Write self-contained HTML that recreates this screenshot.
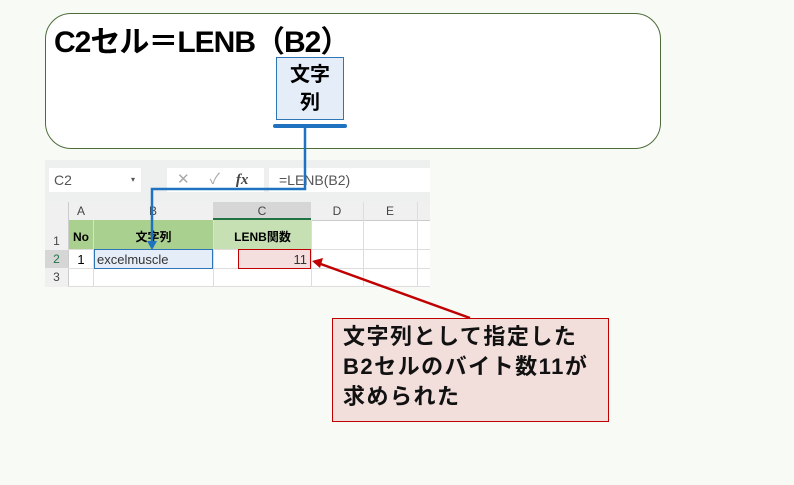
<!DOCTYPE html>
<html><head><meta charset="utf-8"><style>
body{margin:0;width:794px;height:485px;background:#f8faf5;position:relative;overflow:hidden;font-family:"Liberation Sans","Noto Sans CJK JP",sans-serif}
.a{position:absolute}
.cell{position:absolute;box-sizing:border-box;font-size:12px;display:flex;align-items:center}
</style></head><body>
<div class="a" style="left:45px;top:13px;width:616px;height:136px;border:1px solid #4e6b3a;border-radius:26px;background:#fff;box-sizing:border-box"></div>
<div class="a" style="left:54px;top:17px;font-size:30px;font-weight:bold;color:#000;white-space:nowrap;letter-spacing:-1px">C2セル＝LENB（B2）</div>
<div class="a" style="left:276px;top:57px;width:68px;height:63px;background:#e5eef8;border:1px solid #2e75b6;box-sizing:border-box;font-size:20px;font-weight:bold;text-align:center;line-height:28px;padding-top:3px">文字<br>列</div>
<div class="a" style="left:273px;top:124px;width:74px;height:4px;background:#1f72c0;border-radius:2px"></div>
<div class="a" style="left:45px;top:160px;width:385px;height:127px;background:#fff"></div>
<div class="a" style="left:45px;top:160px;width:385px;height:42px;background:#eef0f0"></div>
<div class="a" style="left:49px;top:168px;width:92px;height:24px;background:#fff;font-size:14px;color:#555;line-height:24px;padding-left:5px;box-sizing:border-box">C2<span style="float:right;font-size:8px;margin-right:6px">▾</span></div>
<div class="a" style="left:167px;top:168px;width:97px;height:24px;background:#fff;color:#aaa;font-size:15px;line-height:24px"><span style="margin-left:10px">✕</span><span style="margin-left:20px">✓</span><i style="margin-left:16px;color:#444;font-family:'Liberation Serif',serif;font-weight:bold">fx</i></div>
<div class="a" style="left:269px;top:168px;width:161px;height:24px;background:#fff;font-size:14px;color:#555;line-height:24px;padding-left:10px;box-sizing:border-box">=LENB(B2)</div>
<div class="a" style="left:45px;top:202px;width:385px;height:18px;background:#f0f0f0;border-bottom:1px solid #ccc"></div>
<div class="a" style="left:45px;top:202px;width:23px;height:85px;background:#f0f0f0;border-right:1px solid #ccc"></div>
<div class="a" style="left:213px;top:202px;width:98px;height:18px;background:#d6d6d6;border-bottom:2px solid #217346;box-sizing:border-box"></div>
<div class="cell" style="left:69px;top:202px;width:24px;height:18px;justify-content:center;color:#444">A</div>
<div class="cell" style="left:93px;top:202px;width:120px;height:18px;justify-content:center;color:#444">B</div>
<div class="cell" style="left:213px;top:202px;width:98px;height:18px;justify-content:center;color:#444">C</div>
<div class="cell" style="left:311px;top:202px;width:52px;height:18px;justify-content:center;color:#444">D</div>
<div class="cell" style="left:363px;top:202px;width:54px;height:18px;justify-content:center;color:#444">E</div>
<div class="cell" style="left:45px;top:232px;width:23px;height:18px;justify-content:center;color:#444">1</div>
<div class="cell" style="left:45px;top:250px;width:23px;height:18px;justify-content:center;color:#217346;background:#d6d6d6">2</div>
<div class="cell" style="left:45px;top:268px;width:23px;height:18px;justify-content:center;color:#444">3</div>
<div class="a" style="left:68px;top:249px;width:362px;height:1px;background:#ddd"></div>
<div class="a" style="left:68px;top:268px;width:362px;height:1px;background:#ddd"></div>
<div class="a" style="left:68px;top:286px;width:362px;height:1px;background:#ddd"></div>
<div class="a" style="left:311px;top:220px;width:1px;height:67px;background:#ddd"></div>
<div class="a" style="left:363px;top:202px;width:1px;height:85px;background:#ddd"></div>
<div class="a" style="left:417px;top:202px;width:1px;height:85px;background:#ddd"></div>
<div class="a" style="left:93px;top:250px;width:1px;height:37px;background:#ddd"></div>
<div class="a" style="left:213px;top:250px;width:1px;height:37px;background:#ddd"></div>
<div class="cell" style="left:69px;top:220px;width:24px;height:29px;background:#a9d08e;font-weight:bold;justify-content:center;padding-top:4px">No</div>
<div class="cell" style="left:93px;top:220px;width:120px;height:29px;background:#a9d08e;font-weight:bold;justify-content:center;padding-top:4px;border-left:1px solid #ddd">文字列</div>
<div class="cell" style="left:213px;top:220px;width:98px;height:29px;background:#c6e0b4;font-weight:bold;justify-content:center;padding-top:4px;border-left:1px solid #ddd">LENB関数</div>
<div class="cell" style="left:69px;top:250px;width:24px;height:18px;justify-content:center;font-size:13px">1</div>
<div class="cell" style="left:94px;top:249px;width:119px;height:20px;background:#e5eef8;border:1px solid #2e75b6;padding-left:2px;color:#333;font-size:13px">excelmuscle</div>
<div class="cell" style="left:238px;top:249px;width:73px;height:20px;background:#f4dede;border:1px solid #c00000;justify-content:flex-end;padding-right:3px;color:#333;font-size:13px">11</div>
<svg class="a" style="left:0;top:0" width="794" height="485">
<polyline points="305,128 305,189 152,189 152,243" fill="none" stroke="#1f72c0" stroke-width="2.5"/>
<polygon points="147,241 157,241 152,250" fill="#1f72c0"/>
<line x1="470" y1="318" x2="318" y2="263" stroke="#c00000" stroke-width="2.5"/>
<polygon points="312,261 323,258 320,268" fill="#c00000"/>
</svg>
<div class="a" style="left:332px;top:318px;width:277px;height:104px;background:#f2dfdc;border:1px solid #c00000;box-sizing:border-box;padding:3px 0 0 10px;font-size:22px;letter-spacing:1.5px;font-weight:bold;line-height:30px;color:#111;white-space:nowrap">文字列として指定した<br>B2セルのバイト数11が<br>求められた</div>
</body></html>
